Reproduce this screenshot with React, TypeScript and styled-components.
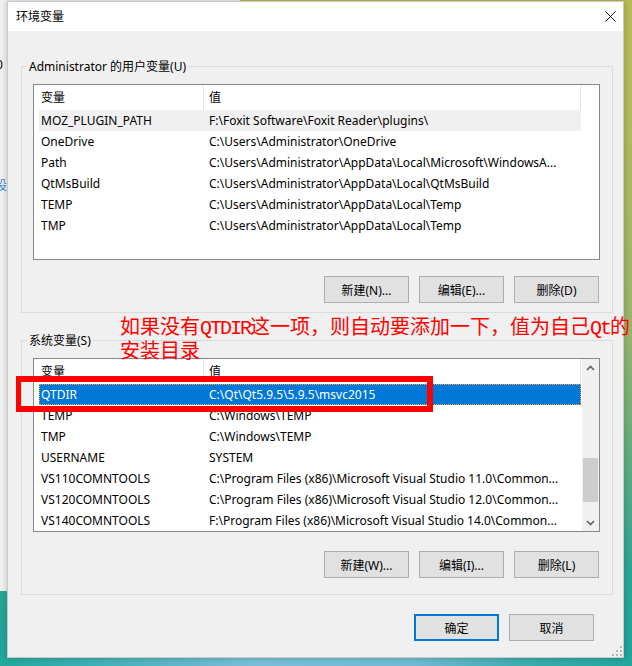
import React from "react";
import styled, { createGlobalStyle } from "styled-components";

const UI_FONT = `"Noto Sans", "Noto Sans CJK SC", sans-serif`;

const GlobalStyle = createGlobalStyle`
  html, body { margin: 0; padding: 0; }
  body {
    width: 632px;
    height: 666px;
    overflow: hidden;
    background: #1fa69c;
    font-family: ${UI_FONT};
  }
  * { box-sizing: border-box; }
`;

const Desktop = styled.div`
  position: relative;
  width: 632px;
  height: 666px;
  overflow: hidden;
  background:
    linear-gradient(90deg, #21a99b 0%, #3fb0b4 15%, #78bfd6 40%, #6fbcd2 65%, #38aba9 85%, #25a69c 100%) left bottom / 100% 8px no-repeat,
    linear-gradient(180deg, #b8bc55 0%, #aab962 30%, #98b56c 50%, #62ad80 68%, #2ca695 85%, #1fa59c 100%);
`;

const BackWindow = styled.div`
  position: absolute;
  left: 0;
  top: 0;
  width: 240px;
  height: 591px;
  background: #f0f0f0;
  overflow: hidden;
  font-size: 12px;
`;

const BackText = styled.span<{ $x: number; $y: number; $color: string }>`
  position: absolute;
  left: ${(p) => p.$x}px;
  top: ${(p) => p.$y}px;
  color: ${(p) => p.$color};
  line-height: 16px;
`;

const Dialog = styled.div`
  position: absolute;
  left: 7px;
  top: 1px;
  width: 617px;
  height: 657px;
  border: 1px solid #c9c9c9;
  background: #f0f0f0;
  box-shadow: 0 0 6px rgba(0, 0, 0, 0.22);
  display: flex;
  flex-direction: column;
`;

const TitleBar = styled.div`
  height: 29px;
  flex: none;
  background: #ffffff;
  display: flex;
  align-items: center;
  justify-content: space-between;
  padding-left: 8px;
  padding-bottom: 1px;
`;

const Title = styled.span`
  font-size: 12px;
  color: #000;
`;

const CloseButton = styled.div`
  width: 26px;
  height: 100%;
  display: flex;
  align-items: center;
  justify-content: center;
`;

const Body = styled.div`
  display: flex;
  flex-direction: column;
  padding: 0 10px 0 13px;
`;

const Group = styled.fieldset<{ $top: number; $padBottom: number }>`
  margin: ${(p) => p.$top}px 0 0 0;
  padding: 9px 12px ${(p) => p.$padBottom}px 11px;
  border: 1px solid #dcdcdc;
  min-width: 0;
`;

const Legend = styled.legend`
  margin-left: -6px;
  padding: 0 2px;
  font-size: 12px;
  line-height: 17px;
  color: #000;
`;

const ListView = styled.div<{ $height: number }>`
  display: flex;
  height: ${(p) => p.$height}px;
  border: 1px solid #828790;
  background: #ffffff;
  overflow: hidden;
`;

const ListBody = styled.div`
  flex: 1;
  min-width: 0;
`;

const Header = styled.div`
  display: flex;
  height: 25px;
  padding-left: 5px;
`;

const HeaderCell = styled.div<{ $w: number; $pad: number }>`
  width: ${(p) => p.$w}px;
  flex: none;
  padding-left: ${(p) => p.$pad}px;
  border-right: 1px solid #e5e5e5;
  font-size: 12px;
  line-height: 25px;
  color: #000;
`;

type RowState = "soft" | "selected" | undefined;

const Row = styled.div<{ $state?: RowState }>`
  display: flex;
  width: 542px;
  height: 21px;
  margin-left: 5px;
  font-size: 12px;
  line-height: 21px;
  color: ${(p) => (p.$state === "selected" ? "#ffffff" : "#000000")};
  background: ${(p) =>
    p.$state === "selected" ? "#0078d7" : p.$state === "soft" ? "#f0f0f0" : "transparent"};
  outline: ${(p) => (p.$state === "selected" ? "1px dotted #f2a444" : "none")};
  outline-offset: -1px;
`;

const Cell = styled.div<{ $w: number; $pad: number }>`
  width: ${(p) => p.$w}px;
  flex: none;
  padding-left: ${(p) => p.$pad}px;
  white-space: nowrap;
  overflow: hidden;
`;

const Scrollbar = styled.div`
  width: 17px;
  flex: none;
  background: #f0f0f0;
  display: flex;
  flex-direction: column;
`;

const ScrollArrow = styled.div`
  height: 17px;
  flex: none;
  display: flex;
  align-items: center;
  justify-content: center;
`;

const Track = styled.div`
  flex: 1;
  padding: 0 1px;
`;

const Thumb = styled.div<{ $offset: number; $size: number }>`
  margin-top: ${(p) => p.$offset}px;
  height: ${(p) => p.$size}px;
  background: #cdcdcd;
`;

const ButtonRow = styled.div<{ $top: number; $right: number }>`
  display: flex;
  justify-content: flex-end;
  gap: 10px;
  margin-top: ${(p) => p.$top}px;
  padding-right: ${(p) => p.$right}px;
`;

const Button = styled.div<{ $default?: boolean }>`
  width: 85px;
  height: 27px;
  background: #e1e1e1;
  border: ${(p) => (p.$default ? "2px solid #0078d7" : "1px solid #adadad")};
  display: flex;
  align-items: center;
  justify-content: center;
  font-size: 12px;
  color: #000;
`;

const Grip = styled.svg`
  position: absolute;
  right: 1px;
  bottom: 1px;
`;

const RedBox = styled.div`
  position: absolute;
  left: 16px;
  top: 376px;
  width: 417px;
  height: 36px;
  border: 6px solid #ff0000;
  border-left-width: 5px;
`;

const Note = styled.div`
  position: absolute;
  left: 120px;
  top: 315px;
  width: 540px;
  font-family: "Noto Sans CJK SC", sans-serif;
  font-size: 20px;
  line-height: 21px;
  color: #ff0000;
  white-space: nowrap;
`;

const Latin = styled.span`
  font-family: "Liberation Mono", monospace;
  letter-spacing: -2px;
`;

const userVars: [string, string][] = [
  ["MOZ_PLUGIN_PATH", "F:\\Foxit Software\\Foxit Reader\\plugins\\"],
  ["OneDrive", "C:\\Users\\Administrator\\OneDrive"],
  ["Path", "C:\\Users\\Administrator\\AppData\\Local\\Microsoft\\WindowsA..."],
  ["QtMsBuild", "C:\\Users\\Administrator\\AppData\\Local\\QtMsBuild"],
  ["TEMP", "C:\\Users\\Administrator\\AppData\\Local\\Temp"],
  ["TMP", "C:\\Users\\Administrator\\AppData\\Local\\Temp"],
];

const sysVars: [string, string][] = [
  ["QTDIR", "C:\\Qt\\Qt5.9.5\\5.9.5\\msvc2015"],
  ["TEMP", "C:\\Windows\\TEMP"],
  ["TMP", "C:\\Windows\\TEMP"],
  ["USERNAME", "SYSTEM"],
  ["VS110COMNTOOLS", "C:\\Program Files (x86)\\Microsoft Visual Studio 11.0\\Common..."],
  ["VS120COMNTOOLS", "C:\\Program Files (x86)\\Microsoft Visual Studio 12.0\\Common..."],
  ["VS140COMNTOOLS", "F:\\Program Files (x86)\\Microsoft Visual Studio 14.0\\Common..."],
];

function Chevron({ up }: { up?: boolean }) {
  return (
    <svg width="9" height="6" viewBox="0 0 9 6">
      <polyline
        points={up ? "1,5 4.5,1.5 8,5" : "1,1 4.5,4.5 8,1"}
        fill="none"
        stroke="#606060"
        strokeWidth="1.6"
      />
    </svg>
  );
}

function VarList({
  rows,
  height,
  highlight,
  scroll,
}: {
  rows: [string, string][];
  height: number;
  highlight: RowState;
  scroll?: boolean;
}) {
  return (
    <ListView $height={height}>
      <ListBody>
        <Header>
          <HeaderCell $w={165} $pad={2}>变量</HeaderCell>
          <HeaderCell $w={377} $pad={5}>值</HeaderCell>
        </Header>
        {rows.map(([name, value], i) => (
          <Row key={name + i} $state={i === 0 ? highlight : undefined}>
            <Cell $w={165} $pad={2}>{name}</Cell>
            <Cell $w={377} $pad={5}>{value}</Cell>
          </Row>
        ))}
      </ListBody>
      {scroll && (
        <Scrollbar>
          <ScrollArrow>
            <Chevron up />
          </ScrollArrow>
          <Track>
            <Thumb $offset={82} $size={44} />
          </Track>
          <ScrollArrow>
            <Chevron />
          </ScrollArrow>
        </Scrollbar>
      )}
    </ListView>
  );
}

export default function App() {
  return (
    <>
      <GlobalStyle />
      <Desktop>
        <BackWindow>
          <BackText $x={-4} $y={57} $color="#000">0</BackText>
          <BackText $x={-5} $y={178} $color="#2f8ad0">设</BackText>
        </BackWindow>
        <Dialog>
          <TitleBar>
            <Title>环境变量</Title>
            <CloseButton>
              <svg width="11" height="11" viewBox="0 0 11 11">
                <path d="M0.5 0.5 L10.5 10.5 M10.5 0.5 L0.5 10.5" stroke="#111" strokeWidth="1" />
              </svg>
            </CloseButton>
          </TitleBar>
          <Body>
            <Group $top={27} $padBottom={9}>
              <Legend>Administrator 的用户变量(U)</Legend>
              <VarList rows={userVars} height={176} highlight="soft" />
              <ButtonRow $top={16} $right={1}>
                <Button>新建(N)...</Button>
                <Button>编辑(E)...</Button>
                <Button>删除(D)</Button>
              </ButtonRow>
            </Group>
            <Group $top={19} $padBottom={16}>
              <Legend>系统变量(S)</Legend>
              <VarList rows={sysVars} height={174} highlight="selected" scroll />
              <ButtonRow $top={19} $right={1}>
                <Button>新建(W)...</Button>
                <Button>编辑(I)...</Button>
                <Button>删除(L)</Button>
              </ButtonRow>
            </Group>
          </Body>
          <ButtonRow $top={19} $right={29}>
            <Button $default>确定</Button>
            <Button>取消</Button>
          </ButtonRow>
          <Grip width="10" height="10" viewBox="0 0 10 10">
            {[
              [8, 0],
              [8, 4],
              [4, 4],
              [8, 8],
              [4, 8],
              [0, 8],
            ].map(([x, y]) => (
              <rect key={`${x}-${y}`} x={x} y={y} width="2" height="2" fill="#b8b8b8" />
            ))}
          </Grip>
        </Dialog>
        <RedBox />
        <Note>
          如果没有<Latin>QTDIR</Latin>这一项，则自动要添加一下，值为自己<Latin>Qt</Latin>的
          <br />
          安装目录
        </Note>
      </Desktop>
    </>
  );
}
